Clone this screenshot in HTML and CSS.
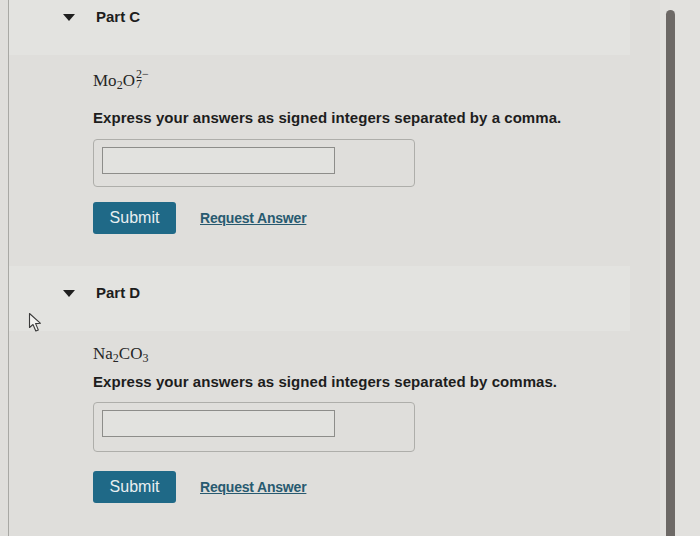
FILE: index.html
```html
<!DOCTYPE html>
<html>

<head>
    <title>Parts C and D</title>
    <link rel="stylesheet" href="styles.css">
</head>

<body>

    <div class="page">
        <div class="main">

            <!-- Part C -->
            <div class="part part-c">
                <div class="part-head">
                    <span class="caret"></span>
                    <span class="part-title">Part C</span>
                </div>
                <div class="part-body">
                    <div class="formula formula-c">Mo<sub>2</sub>O<span class="supsub"><span class="sup">2&minus;</span><span class="sub">7</span></span></div>
                    <div class="prompt">Express your answers as signed integers separated by a comma.</div>
                    <div class="answer-box">
                        <div class="answer-input"></div>
                    </div>
                    <div class="actions">
                        <button class="submit-btn">Submit</button>
                        <a class="request-link" href="#">Request Answer</a>
                    </div>
                </div>
            </div>

            <!-- Part D -->
            <div class="part part-d">
                <div class="part-head">
                    <span class="caret"></span>
                    <span class="part-title">Part D</span>
                </div>
                <div class="part-body">
                    <div class="formula formula-d">Na<sub>2</sub>CO<sub>3</sub></div>
                    <div class="prompt">Express your answers as signed integers separated by commas.</div>
                    <div class="answer-box">
                        <div class="answer-input"></div>
                    </div>
                    <div class="actions">
                        <button class="submit-btn">Submit</button>
                        <a class="request-link" href="#">Request Answer</a>
                    </div>
                </div>
            </div>

        </div>
        <div class="rail">
            <div class="thumb"></div>
        </div>
    </div>

    <!-- mouse pointer -->
    <svg class="cursor" width="18" height="21" viewBox="0 0 18 21">
        <path d="M1.5 1.5 L1.5 15.5 L5 12.5 L7.8 19 L10.3 17.9 L7.6 11.6 L12.5 11.3 Z" fill="#f2f2f0" stroke="#3a3a3a" stroke-width="1.1" stroke-linejoin="round" />
    </svg>

</body>

</html>
```

FILE: styles.css
```css
html,
body {
    margin: 0;
    padding: 0;
}

body {
    background: #dfdedb;
    font-family: "Liberation Sans", Arial, sans-serif;
    color: #1d1d1d;
    position: relative;
    height: 536px;
    overflow: hidden;
}

.page {
    display: flex;
    height: 536px;
}

/* content column with the thin left rule */
.main {
    flex: 1;
    margin-left: 8px;
    border-left: 1px solid #a8a8a4;
}

.part-head {
    display: flex;
    align-items: center;
    height: 20px;
    padding: 17px 0 28px 54px;
    margin-right: 30px;
    background: #e3e3e0;
}

.part-c .part-head {
    margin-top: -10px;
}

.part-d {
    margin-top: 32px;
}

.caret {
    width: 0;
    height: 0;
    border-left: 6.5px solid transparent;
    border-right: 6.5px solid transparent;
    border-top: 7px solid #1f1f1f;
    margin-right: 21px;
}

.part-title {
    font-size: 15px;
    font-weight: bold;
    line-height: 20px;
}

.part-body {
    padding-left: 84px;
}

/* chemical formulas, typeset look */
.formula {
    font-family: "Liberation Serif", "Times New Roman", serif;
    font-size: 17px;
    line-height: 24px;
    height: 24px;
    color: #262626;
}

.formula sub {
    font-size: 12px;
    vertical-align: -3px;
    line-height: 0;
}

.supsub {
    display: inline-flex;
    flex-direction: column;
    vertical-align: 8px;
    margin-left: 1px;
    font-size: 12px;
    line-height: 10px;
}

.formula-c {
    margin-top: 14px;
    margin-bottom: 15px;
}

.formula-d {
    margin-top: 11px;
    margin-bottom: 6px;
}

.prompt {
    font-size: 15px;
    font-weight: bold;
    line-height: 20px;
    letter-spacing: 0.05px;
}

.answer-box {
    width: 312px;
    height: 39px;
    margin-top: 11px;
    padding: 7px 0 0 8px;
    border: 1px solid #aeaeaa;
    border-radius: 4px;
    box-sizing: content-box;
}

.answer-input {
    width: 231px;
    height: 25px;
    border: 1px solid #8d8d8a;
    background: #e2e2df;
}

.actions {
    display: flex;
    align-items: center;
    margin-top: 15px;
}

.part-d .actions {
    margin-top: 19px;
}

.part-d .answer-box {
    height: 41px;
    margin-top: 10px;
}

.submit-btn {
    width: 83px;
    height: 32px;
    border: none;
    border-radius: 3px;
    background: #1f6987;
    color: #e9eff1;
    font-family: "Liberation Sans", Arial, sans-serif;
    font-size: 16px;
    padding: 0;
}

.request-link {
    margin-left: 24px;
    font-size: 14px;
    font-weight: bold;
    color: #285a70;
    text-decoration: underline;
    letter-spacing: -0.2px;
}

/* browser scrollbar on the right */
.rail {
    width: 34px;
    padding: 10px 0 0 6px;
    background: #e2e1de;
}

.thumb {
    width: 9px;
    height: 100%;
    background: #6d6966;
    border-radius: 5px 5px 0 0;
}

.cursor {
    position: absolute;
    left: 28px;
    top: 312px;
}
```
